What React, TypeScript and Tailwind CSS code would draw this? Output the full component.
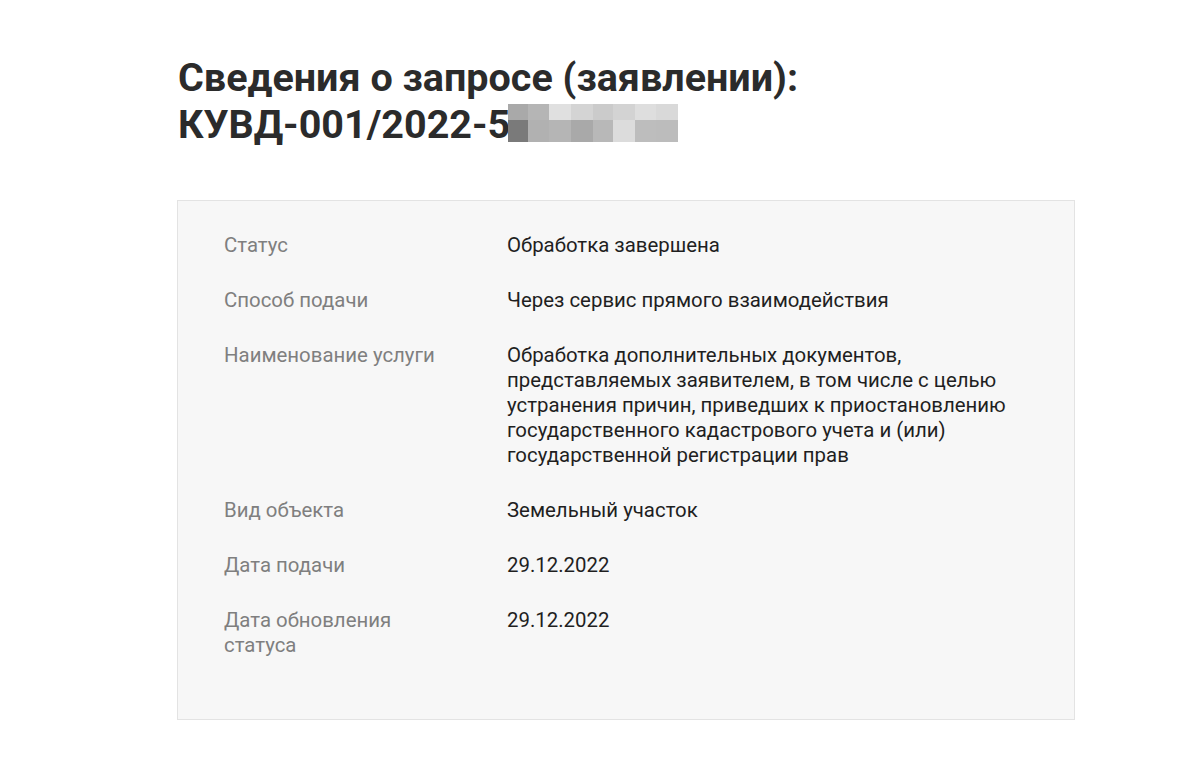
import React from "react";

const rows: { label: string; value: string[] }[] = [
  { label: "Статус", value: ["Обработка завершена"] },
  { label: "Способ подачи", value: ["Через сервис прямого взаимодействия"] },
  {
    label: "Наименование услуги",
    value: [
      "Обработка дополнительных документов,",
      "представляемых заявителем, в том числе с целью",
      "устранения причин, приведших к приостановлению",
      "государственного кадастрового учета и (или)",
      "государственной регистрации прав",
    ],
  },
  { label: "Вид объекта", value: ["Земельный участок"] },
  { label: "Дата подачи", value: ["29.12.2022"] },
  { label: "Дата обновления статуса", value: ["29.12.2022"] },
];

function Blur() {
  return (
    <span className="inline-flex flex-col align-top mt-[3px] ml-[-2px]">
      <span className="flex h-[16px]">
        <span className="w-[20px] bg-[#a9a9a9]" />
        <span className="w-[21px] bg-[#b5b5b5]" />
        <span className="w-[22px] bg-[#e0e0e0]" />
        <span className="w-[22px] bg-[#d4d4d4]" />
        <span className="w-[20px] bg-[#cbcbcb]" />
        <span className="w-[22px] bg-[#d3d3d3]" />
        <span className="w-[21px] bg-[#dedede]" />
        <span className="w-[22px] bg-[#d9d9d9]" />
      </span>
      <span className="flex h-[22px]">
        <span className="w-[20px] bg-[#7a7a7a]" />
        <span className="w-[21px] bg-[#b1b1b1]" />
        <span className="w-[22px] bg-[#b5b5b5]" />
        <span className="w-[22px] bg-[#a9a9a9]" />
        <span className="w-[20px] bg-[#b8b8b8]" />
        <span className="w-[22px] bg-[#dcdcdc]" />
        <span className="w-[21px] bg-[#bdbdbd]" />
        <span className="w-[22px] bg-[#bcbcbc]" />
      </span>
    </span>
  );
}

export default function App() {
  return (
    <div
      className="min-h-[758px] bg-white pl-[177px] pt-[54px]"
      style={{ fontFamily: "Roboto, 'Noto Sans', sans-serif" }}
    >
      <h1 className="pl-[1px] text-[39.5px] font-bold leading-[47px] text-[#2b2b2b]">
        <div>Сведения о запросе (заявлении):</div>
        <div className="flex items-start">
          <span>КУВД-001/2022-5</span>
          <Blur />
        </div>
      </h1>
      <div className="mt-[52px] w-[898px] border border-[#e3e3e3] bg-[#f7f7f7] pl-[46px] pr-[40px] pt-[32px] pb-[31px]">
        {rows.map((r) => (
          <div key={r.label} className="mb-[30px] flex text-[20.4px] leading-[25px]">
            <div className="w-[283px] shrink-0 pr-[50px] text-[#7f7f7f]">{r.label}</div>
            <div className="text-[#1f1f1f]">
              {r.value.map((v) => (
                <div key={v}>{v}</div>
              ))}
            </div>
          </div>
        ))}
      </div>
    </div>
  );
}
